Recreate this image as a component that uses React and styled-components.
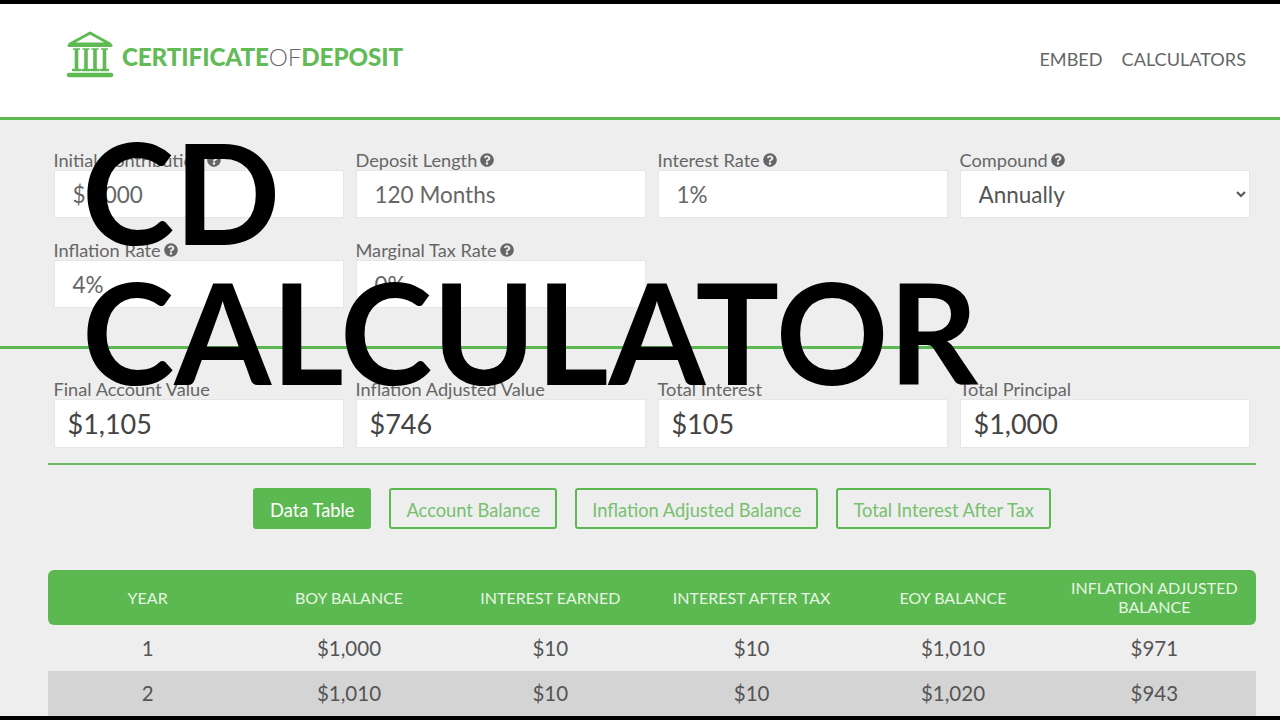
import React from "react";
import styled, { createGlobalStyle } from "styled-components";
import { FaQuestionCircle } from "react-icons/fa";

const Global = createGlobalStyle`
  html, body { margin: 0; padding: 0; background: #000; }
  * { box-sizing: border-box; }
`;

const Page = styled.div`
  position: relative;
  width: 1280px;
  height: 720px;
  overflow: hidden;
  background: #eeeeee;
  font-family: Lato, "Liberation Sans", sans-serif;
  color: #555;
  border-top: 4px solid #000;
`;

const BottomBar = styled.div`
  position: absolute;
  left: 0;
  right: 0;
  bottom: 0;
  height: 4px;
  background: #000;
`;

const Title = styled.div`
  position: absolute;
  left: 82px;
  top: 117px;
  width: 1000px;
  font-family: Lato, sans-serif;
  font-weight: 700;
  font-size: 139.5px;
  line-height: 140px;
  color: #000;
`;

const Header = styled.header`
  height: 116px;
  background: #fff;
  border-bottom: 3.5px solid #5cb951;
  display: flex;
  justify-content: space-between;
  align-items: flex-start;
  padding: 27px 34px 0 66px;
`;

const Logo = styled.div`
  display: flex;
  align-items: center;
  gap: 8px;
`;

const LogoText = styled.div`
  font-family: Lato, sans-serif;
  font-weight: 900;
  font-size: 24.2px;
  letter-spacing: -0.1px;
  color: #62bb57;
  padding-top: 3px;
`;

const LogoOf = styled.span`
  font-weight: 300;
  color: #666a70;
`;

const Nav = styled.nav`
  display: flex;
  gap: 19px;
  padding-top: 17px;
`;

const NavLink = styled.a`
  font-size: 18.1px;
  color: #666;
`;

const FormSection = styled.section`
  height: 229px;
  padding: 30px 30px 0 53.5px;
  border-bottom: 3px solid #5cb951;
`;

const Grid = styled.div`
  display: grid;
  grid-template-columns: repeat(4, 290px);
  column-gap: 12px;
  row-gap: 22px;
`;

const Field = styled.div`
  display: flex;
  flex-direction: column;
`;

const Label = styled.div`
  display: flex;
  align-items: center;
  gap: 3px;
  height: 20px;
  font-size: 18.2px;
  color: #666;
  white-space: nowrap;
`;

const Input = styled.div`
  height: ${(p) => (p.$big ? 49 : 48)}px;
  background: #fff;
  border: 1px solid #e6e6e6;
  display: flex;
  align-items: center;
  padding-left: ${(p) => (p.$big ? 13 : 18)}px;
  font-size: ${(p) => (p.$big ? 27 : 22.5)}px;
  color: ${(p) => (p.$big ? "#444" : "#666")};
`;

const Select = styled.select`
  height: 48px;
  width: 100%;
  background: #fff;
  border: 1px solid #e6e6e6;
  border-radius: 0;
  padding-left: 14px;
  font-family: inherit;
  font-size: 22.5px;
  color: #555;
`;

const Results = styled.section`
  padding: 30px 24px 0 48px;
`;

const ResultsGrid = styled(Grid)`
  padding-left: 5.5px;
`;

const Divider = styled.div`
  height: 2px;
  margin-top: 15px;
  background: #68bd5e;
`;

const Tabs = styled.div`
  display: flex;
  justify-content: center;
  gap: 18px;
  margin: 23px 0 41px;
`;

const Tab = styled.button`
  height: 41px;
  padding: 2px 15px 0;
  border: 2px solid #5cb951;
  border-radius: 3px;
  background: ${(p) => (p.$active ? "#5cb951" : "transparent")};
  color: ${(p) => (p.$active ? "#fff" : "#77c06e")};
  font-family: inherit;
  font-size: 18.3px;
  white-space: nowrap;
`;

const Table = styled.table`
  width: 1208px;
  border-collapse: collapse;
  table-layout: fixed;
`;

const Th = styled.th`
  height: 55px;
  background: #5cb951;
  color: #e6f5e3;
  font-weight: 400;
  font-size: 16px;
  line-height: 19px;
  padding: 0 12px 1px 10px;
  text-align: center;
  &:first-child { border-radius: 6px 0 0 6px; }
  &:last-child { border-radius: 0 6px 6px 0; }
`;

const Tr = styled.tr`
  background: ${(p) => (p.$shaded ? "#d4d4d4" : "transparent")};
`;

const Td = styled.td`
  height: 45.5px;
  text-align: center;
  font-size: 20.5px;
  color: #555;
  padding: 0 2px 0 0;
`;

const Help = () => <FaQuestionCircle size={14} color="#666" />;

const LogoIcon = () => (
  <svg width="48" height="48" viewBox="0 0 48 48" fill="none" stroke="#5fba54">
    <path d="M4 13 L24 2 L44 13 Z" strokeWidth="3" strokeLinejoin="round" />
    <path d="M3 14.5 H45" strokeWidth="3" strokeLinecap="round" />
    <path d="M10.5 18 V39 M20 18 V39 M29 18 V39 M38.5 18 V39" strokeWidth="3.6" />
    <path d="M7 18 H14 M16.5 18 H23.5 M25.5 18 H32.5 M35 18 H42" strokeWidth="1.6" />
    <path d="M7 39 H14 M16.5 39 H23.5 M25.5 39 H32.5 M35 39 H42" strokeWidth="2.4" strokeLinecap="round" />
    <path d="M3 44 H45" strokeWidth="4.5" strokeLinecap="round" />
  </svg>
);

const inputs = [
  ["Initial Contribution", "$1,000"],
  ["Deposit Length", "120 Months"],
  ["Interest Rate", "1%"],
  ["Compound", null],
  ["Inflation Rate", "4%"],
  ["Marginal Tax Rate", "0%"],
];

const results = [
  ["Final Account Value", "$1,105"],
  ["Inflation Adjusted Value", "$746"],
  ["Total Interest", "$105"],
  ["Total Principal", "$1,000"],
];

const tabs = ["Data Table", "Account Balance", "Inflation Adjusted Balance", "Total Interest After Tax"];
const heads = ["YEAR", "BOY BALANCE", "INTEREST EARNED", "INTEREST AFTER TAX", "EOY BALANCE", "INFLATION ADJUSTED BALANCE"];
const rows = [
  ["1", "$1,000", "$10", "$10", "$1,010", "$971"],
  ["2", "$1,010", "$10", "$10", "$1,020", "$943"],
];

export default function App() {
  return (
    <Page>
      <Global />
      <Header>
        <Logo>
          <LogoIcon />
          <LogoText>
            CERTIFICATE<LogoOf>OF</LogoOf>DEPOSIT
          </LogoText>
        </Logo>
        <Nav>
          <NavLink>EMBED</NavLink>
          <NavLink>CALCULATORS</NavLink>
        </Nav>
      </Header>
      <FormSection>
        <Grid>
          {inputs.map(([label, value]) => (
            <Field key={label}>
              <Label>
                {label} <Help />
              </Label>
              {value === null ? (
                <Select defaultValue="Annually">
                  <option>Annually</option>
                </Select>
              ) : (
                <Input>{value}</Input>
              )}
            </Field>
          ))}
        </Grid>
      </FormSection>
      <Results>
        <ResultsGrid>
          {results.map(([label, value]) => (
            <Field key={label}>
              <Label>{label}</Label>
              <Input $big>{value}</Input>
            </Field>
          ))}
        </ResultsGrid>
        <Divider />
        <Tabs>
          {tabs.map((t, i) => (
            <Tab key={t} $active={i === 0}>{t}</Tab>
          ))}
        </Tabs>
        <Table>
          <thead>
            <tr>
              {heads.map((h) => (
                <Th key={h}>{h}</Th>
              ))}
            </tr>
          </thead>
          <tbody>
            {rows.map((r, i) => (
              <Tr key={r[0]} $shaded={i === 1}>
                {r.map((c, j) => (
                  <Td key={j}>{c}</Td>
                ))}
              </Tr>
            ))}
          </tbody>
        </Table>
      </Results>
      <Title>CD CALCULATOR</Title>
      <BottomBar />
    </Page>
  );
}
